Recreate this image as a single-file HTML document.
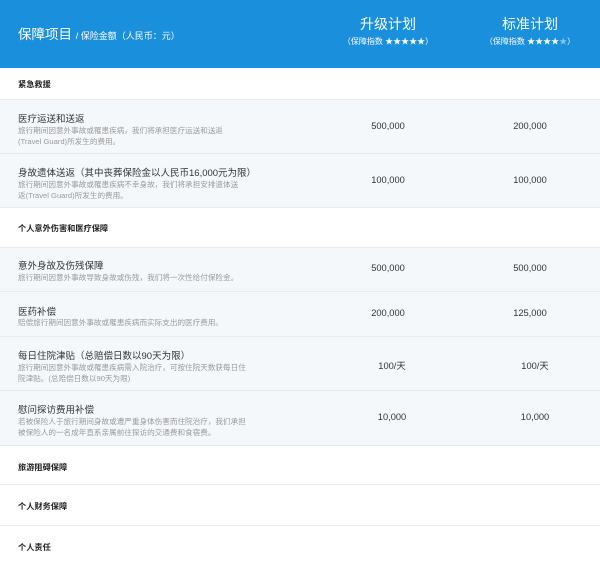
<!DOCTYPE html>
<html><head><meta charset="utf-8"><style>
*{margin:0;padding:0;box-sizing:border-box}
body{width:600px;height:565px;background:#fff;font-family:"Liberation Sans","Noto Sans CJK SC",sans-serif;position:relative;overflow:hidden;color:#333}
.hd{position:absolute;left:0;top:0;width:600px;height:68px;background:#1a8fdc;color:#fff}
.hd .t{position:absolute;left:18px;top:23px;font-size:13.5px;white-space:nowrap}
.hd .t small{font-size:9px}
.pl{position:absolute;top:16px;width:160px;text-align:center;white-space:nowrap}
.pl b{display:block;font-weight:normal;font-size:14px;line-height:17px}
.pl i{display:block;font-style:normal;font-size:8px;line-height:11px;margin-top:3px}
.row{position:absolute;left:0;width:600px;border-bottom:1px solid #e6ebf0}
.sec{background:#fff}
.sec span{position:absolute;left:18px;font-size:8.2px;font-weight:bold;color:#222}
.it{background:#f5f8fb}
.it .n{position:absolute;left:18px;font-size:9.5px;color:#333;white-space:nowrap}
.it .d{position:absolute;left:18px;width:222px;font-size:7.6px;line-height:11px;color:#999}
.v{position:absolute;width:100px;text-align:center;font-size:9.3px;color:#333}
</style></head><body>
<div class="hd">
<div class="t">保障项目 <small>/ 保险金额（人民币：元）</small></div>
<div class="pl" style="left:308px"><b>升级计划</b><i>（保障指数 ★★★★★）</i></div>
<div class="pl" style="left:450px"><b>标准计划</b><i>（保障指数 ★★★★<span style="color:#8cc4ee">★</span>）</i></div>
</div>

<div class="row sec" style="top:68px;height:32px"><span style="top:10px">紧急救援</span></div>
<div class="row it" style="top:100px;height:54px">
<div class="n" style="top:11px">医疗运送和送返</div>
<div class="d" style="top:25px">旅行期间因意外事故或罹患疾病，我们将承担医疗运送和送返(Travel Guard)所发生的费用。</div>
<div class="v" style="left:338px;top:21px">500,000</div><div class="v" style="left:480px;top:21px">200,000</div></div>
<div class="row it" style="top:154px;height:54px">
<div class="n" style="top:11px">身故遗体送返（其中丧葬保险金以人民币16,000元为限）</div>
<div class="d" style="top:25px">旅行期间因意外事故或罹患疾病不幸身故，我们将承担安排遗体送返(Travel Guard)所发生的费用。</div>
<div class="v" style="left:338px;top:21px">100,000</div><div class="v" style="left:480px;top:21px">100,000</div></div>

<div class="row sec" style="top:208px;height:40px"><span style="top:14px">个人意外伤害和医疗保障</span></div>
<div class="row it" style="top:248px;height:44px">
<div class="n" style="top:10px">意外身故及伤残保障</div>
<div class="d" style="top:24px;width:400px">旅行期间因意外事故导致身故或伤残，我们将一次性给付保险金。</div>
<div class="v" style="left:338px;top:15px">500,000</div><div class="v" style="left:480px;top:15px">500,000</div></div>
<div class="row it" style="top:292px;height:45px">
<div class="n" style="top:12px">医药补偿</div>
<div class="d" style="top:25px;width:400px">赔偿旅行期间因意外事故或罹患疾病而实际支出的医疗费用。</div>
<div class="v" style="left:338px;top:16px">200,000</div><div class="v" style="left:480px;top:16px">125,000</div></div>
<div class="row it" style="top:337px;height:54px">
<div class="n" style="top:11px">每日住院津贴（总赔偿日数以90天为限）</div>
<div class="d" style="top:25px;width:228px">旅行期间因意外事故或罹患疾病需入院治疗，可按住院天数获每日住院津贴。(总赔偿日数以90天为限)</div>
<div class="v" style="left:342px;top:21px">100/天</div><div class="v" style="left:485px;top:21px">100/天</div></div>
<div class="row it" style="top:391px;height:55px">
<div class="n" style="top:11px">慰问探访费用补偿</div>
<div class="d" style="top:25px;width:228px">若被保险人于旅行期间身故或遭严重身体伤害而住院治疗，我们承担被保险人的一名成年直系亲属前往探访的交通费和食宿费。</div>
<div class="v" style="left:342px;top:21px">10,000</div><div class="v" style="left:485px;top:21px">10,000</div></div>

<div class="row sec" style="top:446px;height:39px"><span style="top:15px">旅游阻碍保障</span></div>
<div class="row sec" style="top:485px;height:41px"><span style="top:15px">个人财务保障</span></div>
<div class="row sec" style="top:526px;height:39px;border:0"><span style="top:15px">个人责任</span></div>
</body></html>
